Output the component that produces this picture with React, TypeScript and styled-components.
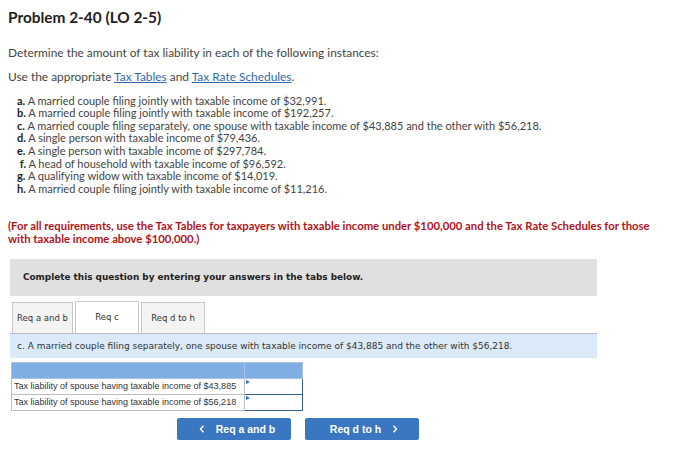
import React from 'react'
import styled, { createGlobalStyle } from 'styled-components'

const Global = createGlobalStyle`
  body {
    margin: 8px;
    background: #fff;
    font-family: Lato, "Liberation Sans", sans-serif;
    color: #333;
  }
`

const Title = styled.h1`
  margin: 0;
  font-size: 15.4px;
  line-height: 18px;
  font-weight: 700;
  color: #222;
`

const Para = styled.p`
  margin: ${({ top }) => top}px 0 0;
  font-size: 11.9px;
  line-height: 16px;
  color: #444;
`

const DocLink = styled.a`
  color: #2f6aa8;
  text-decoration: underline;
`

const List = styled.ol`
  list-style: none;
  margin: 9.7px 0 0;
  padding: 0 0 0 9px;
`

const Item = styled.li`
  font-size: 11px;
  line-height: 12.6px;
  color: #444;
  b {
    color: #222;
  }
`

const Note = styled.p`
  margin: 24px 0 0;
  font-size: 11.3px;
  line-height: 13px;
  font-weight: 700;
  color: #b4121b;
`

const Prompt = styled.div`
  margin: 13.5px 0 0 2px;
  width: 587px;
  height: 37px;
  box-sizing: border-box;
  background: #e0e0e0;
  display: flex;
  align-items: center;
  padding-left: 13px;
  font-family: "DejaVu Sans", Verdana, sans-serif;
  font-size: 8.9px;
  font-weight: 700;
  color: #222;
`

const Tabs = styled.div`
  margin: 5px 0 0 4px;
  display: flex;
  align-items: flex-end;
  gap: 2px;
  height: 32px;
`

const Tab = styled.div`
  height: ${({ active }) => (active ? 32 : 31)}px;
  width: ${({ w }) => w}px;
  box-sizing: border-box;
  border: 1px solid #c9c9c9;
  border-bottom: none;
  background: ${({ active }) => (active ? '#fff' : '#f4f4f4')};
  display: flex;
  align-items: center;
  justify-content: center;
  font-family: "DejaVu Sans", Verdana, sans-serif;
  font-size: 8.5px;
  color: #333;
`

const Info = styled.div`
  margin-left: 2px;
  width: 587px;
  height: 25px;
  box-sizing: border-box;
  background: #dbeaf8;
  border-top: 1px solid #b8bec4;
  display: flex;
  align-items: center;
  padding-left: 7px;
  font-family: "DejaVu Sans", Verdana, sans-serif;
  font-size: 9px;
  color: #333;
`

const Table = styled.table`
  margin: 4px 0 0 3px;
  border-collapse: collapse;
  font-family: "Liberation Sans", Arial, sans-serif;
  font-size: 9px;
  line-height: 13px;
  color: #333;
`

const HeadCell = styled.td`
  height: 15px;
  padding: 0;
  width: ${({ w }) => w}px;
  background: #7eaee4;
  border: 1px solid #a9c3e0;
`

const LabelCell = styled.td`
  height: 15px;
  padding: 0 2px;
  border: 1px solid #bdbdbd;
  white-space: nowrap;
`

const InputCell = styled.td`
  position: relative;
  height: 14px;
  padding: 0;
  border: 1.5px solid #355f8f;
  background: #fff;
  &::before {
    content: '';
    position: absolute;
    left: 1px;
    top: 1px;
    border-left: 4px solid #2e6fc0;
    border-top: 2.5px solid transparent;
    border-bottom: 2.5px solid transparent;
  }
`

const Buttons = styled.div`
  margin: 7px 0 0 169px;
  display: flex;
  gap: 14px;
`

const NavButton = styled.button`
  width: 114px;
  height: 22px;
  border: none;
  border-radius: 2px;
  background: #3a77c0;
  color: #fff;
  font-family: "Liberation Sans", Arial, sans-serif;
  font-size: 10.5px;
  font-weight: 700;
  display: flex;
  align-items: center;
  justify-content: center;
  gap: 11px;
  padding: ${({ pad }) => pad};
`

const Chevron = ({ dir }) => (
  <svg width="6" height="8" viewBox="0 0 6 8">
    <path
      d={dir === 'left' ? 'M4.5 0.8 L1.5 4 L4.5 7.2' : 'M1.5 0.8 L4.5 4 L1.5 7.2'}
      fill="none"
      stroke="#fff"
      strokeWidth="1.4"
    />
  </svg>
)

const items = [
  ['a.', 'A married couple filing jointly with taxable income of $32,991.'],
  ['b.', 'A married couple filing jointly with taxable income of $192,257.'],
  ['c.', 'A married couple filing separately, one spouse with taxable income of $43,885 and the other with $56,218.'],
  ['d.', 'A single person with taxable income of $79,436.'],
  ['e.', 'A single person with taxable income of $297,784.'],
  ['\u00a0f.', 'A head of household with taxable income of $96,592.'],
  ['g.', 'A qualifying widow with taxable income of $14,019.'],
  ['h.', 'A married couple filing jointly with taxable income of $11,216.'],
]

export default function App() {
  return (
    <>
      <Global />
      <Title>Problem 2-40 (LO 2-5)</Title>
      <Para top={19}>Determine the amount of tax liability in each of the following instances:</Para>
      <Para top={8}>
        Use the appropriate <DocLink>Tax Tables</DocLink> and <DocLink>Tax Rate Schedules</DocLink>.
      </Para>
      <List>
        {items.map(([k, t]) => (
          <Item key={k}>
            <b>{k}</b> {t}
          </Item>
        ))}
      </List>
      <Note>
        (For all requirements, use the Tax Tables for taxpayers with taxable income under $100,000 and the Tax Rate Schedules for those
        <br />
        with taxable income above $100,000.)
      </Note>
      <Prompt>Complete this question by entering your answers in the tabs below.</Prompt>
      <Tabs>
        <Tab w={61}>Req a and b</Tab>
        <Tab w={64} active>Req c</Tab>
        <Tab w={64}>Req d to h</Tab>
      </Tabs>
      <Info>c. A married couple filing separately, one spouse with taxable income of $43,885 and the other with $56,218.</Info>
      <Table>
        <tbody>
          <tr>
            <HeadCell w={232} />
            <HeadCell w={57} />
          </tr>
          <tr>
            <LabelCell>Tax liability of spouse having taxable income of $43,885</LabelCell>
            <InputCell />
          </tr>
          <tr>
            <LabelCell>Tax liability of spouse having taxable income of $56,218</LabelCell>
            <InputCell />
          </tr>
        </tbody>
      </Table>
      <Buttons>
        <NavButton pad="0 0 0 6px">
          <Chevron dir="left" />
          Req a and b
        </NavButton>
        <NavButton pad="0 0 0 4px">
          Req d to h
          <Chevron dir="right" />
        </NavButton>
      </Buttons>
    </>
  )
}
